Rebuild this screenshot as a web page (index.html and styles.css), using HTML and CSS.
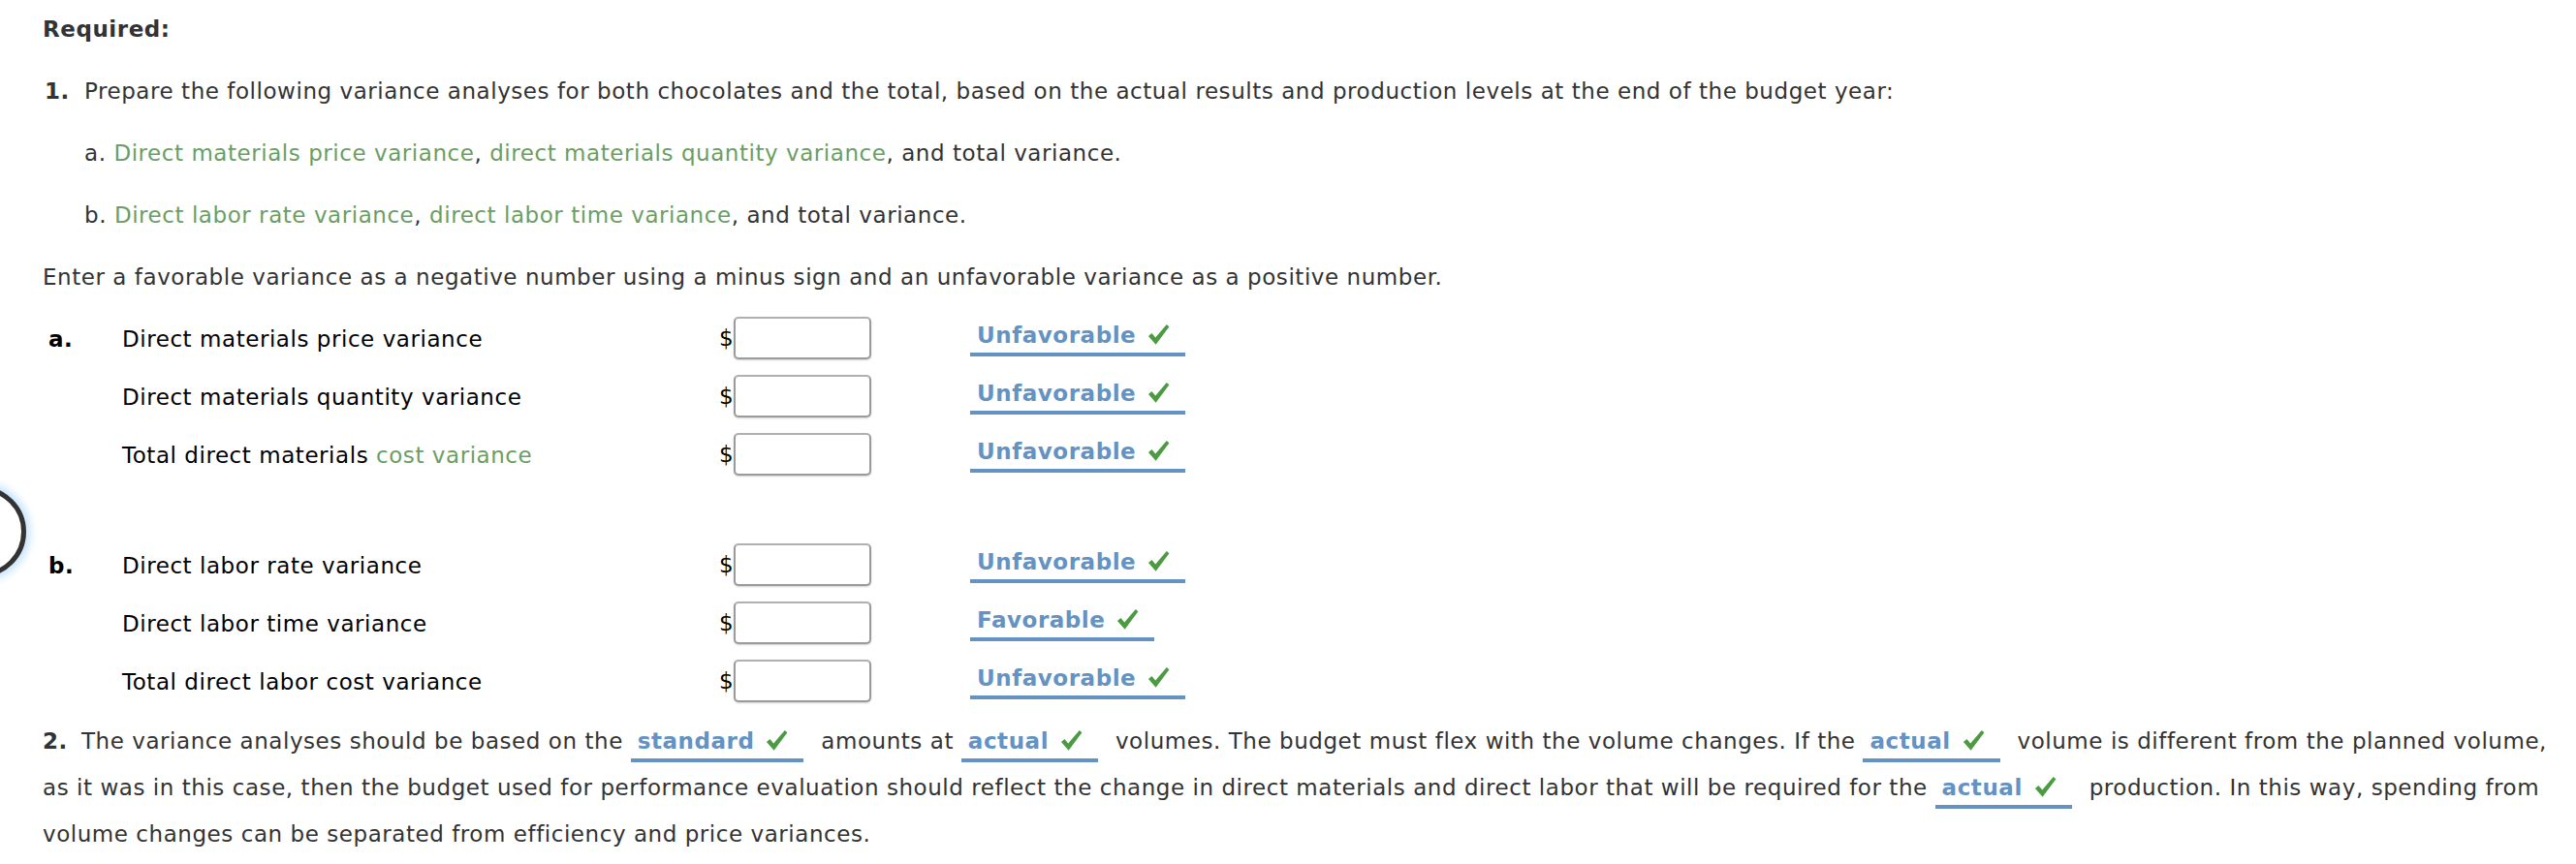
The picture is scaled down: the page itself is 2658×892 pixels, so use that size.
FILE: index.html
```html
<!DOCTYPE html>
<html lang="en">
<head>
<meta charset="utf-8">
<title>Required</title>
<link rel="stylesheet" href="styles.css">
</head>
<body>
<div class="focus-ring"></div>
<main class="page">
  <p class="required">Required:</p>
  <p class="line"><span class="num">1.</span>Prepare the following variance analyses for both chocolates and the total, based on the actual results and production levels at the end of the budget year:</p>
  <p class="line sub">a. <span class="term">Direct materials price variance</span>, <span class="term">direct materials quantity variance</span>, and total variance.</p>
  <p class="line sub">b. <span class="term">Direct labor rate variance</span>, <span class="term">direct labor time variance</span>, and total variance.</p>
  <p class="line">Enter a favorable variance as a negative number using a minus sign and an unfavorable variance as a positive number.</p>

  <div class="grid">
    <div class="letter">a.</div>
    <div class="label">Direct materials price variance</div>
    <div class="amount">$<input class="box" type="text"></div>
    <div class="cell"><span class="pick">Unfavorable<svg class="ok" viewBox="0 0 24 24"><path d="M1 13.5 L4.6 10.4 L8.6 15 L20.6 1 L23.4 3.4 L9 22.6 Z"/></svg></span></div>

    <div class="letter"></div>
    <div class="label">Direct materials quantity variance</div>
    <div class="amount">$<input class="box" type="text"></div>
    <div class="cell"><span class="pick">Unfavorable<svg class="ok" viewBox="0 0 24 24"><path d="M1 13.5 L4.6 10.4 L8.6 15 L20.6 1 L23.4 3.4 L9 22.6 Z"/></svg></span></div>

    <div class="letter"></div>
    <div class="label">Total direct materials <span class="term">cost variance</span></div>
    <div class="amount">$<input class="box" type="text"></div>
    <div class="cell"><span class="pick">Unfavorable<svg class="ok" viewBox="0 0 24 24"><path d="M1 13.5 L4.6 10.4 L8.6 15 L20.6 1 L23.4 3.4 L9 22.6 Z"/></svg></span></div>
  </div>

  <div class="grid grid-b">
    <div class="letter">b.</div>
    <div class="label">Direct labor rate variance</div>
    <div class="amount">$<input class="box" type="text"></div>
    <div class="cell"><span class="pick">Unfavorable<svg class="ok" viewBox="0 0 24 24"><path d="M1 13.5 L4.6 10.4 L8.6 15 L20.6 1 L23.4 3.4 L9 22.6 Z"/></svg></span></div>

    <div class="letter"></div>
    <div class="label">Direct labor time variance</div>
    <div class="amount">$<input class="box" type="text"></div>
    <div class="cell"><span class="pick">Favorable<svg class="ok" viewBox="0 0 24 24"><path d="M1 13.5 L4.6 10.4 L8.6 15 L20.6 1 L23.4 3.4 L9 22.6 Z"/></svg></span></div>

    <div class="letter"></div>
    <div class="label">Total direct labor cost variance</div>
    <div class="amount">$<input class="box" type="text"></div>
    <div class="cell"><span class="pick">Unfavorable<svg class="ok" viewBox="0 0 24 24"><path d="M1 13.5 L4.6 10.4 L8.6 15 L20.6 1 L23.4 3.4 L9 22.6 Z"/></svg></span></div>
  </div>

  <p class="para"><span class="num num2">2.</span>The variance analyses should be based on the <span class="pick">standard<svg class="ok" viewBox="0 0 24 24"><path d="M1 13.5 L4.6 10.4 L8.6 15 L20.6 1 L23.4 3.4 L9 22.6 Z"/></svg></span> amounts at <span class="pick">actual<svg class="ok" viewBox="0 0 24 24"><path d="M1 13.5 L4.6 10.4 L8.6 15 L20.6 1 L23.4 3.4 L9 22.6 Z"/></svg></span> volumes. The budget must flex with the volume changes. If the <span class="pick">actual<svg class="ok" viewBox="0 0 24 24"><path d="M1 13.5 L4.6 10.4 L8.6 15 L20.6 1 L23.4 3.4 L9 22.6 Z"/></svg></span> volume is different from the planned volume, as it was in this case, then the budget used for performance evaluation should reflect the change in direct materials and direct labor that will be required for the <span class="pick">actual<svg class="ok" viewBox="0 0 24 24"><path d="M1 13.5 L4.6 10.4 L8.6 15 L20.6 1 L23.4 3.4 L9 22.6 Z"/></svg></span> production. In this way, spending from volume changes can be separated from efficiency and price variances.</p>
</main>
</body>
</html>
```
FILE: styles.css
```css
html, body {
  margin: 0;
  padding: 0;
  background: #ffffff;
}

body {
  font-family: "DejaVu Sans", Verdana, sans-serif;
  font-size: 23px;
  letter-spacing: 0.55px;
  color: #333333;
  overflow: hidden;
}

.page {
  padding: 15px 24px 0 44px;
}

.required {
  margin: 0;
  font-weight: bold;
  line-height: 30px;
}

.line {
  margin: 34px 0 0 0;
  line-height: 30px;
}

.sub {
  padding-left: 43px;
}

.num {
  display: inline-block;
  width: 41px;
  font-weight: bold;
  margin-left: 2px;
}

.num2 {
  width: 40px;
  margin-left: 0;
}

.term {
  color: #6a9e63;
}

.grid {
  display: grid;
  grid-template-columns: 76px 616px 157px auto;
  grid-auto-rows: 60px;
  align-items: center;
  margin: 18px 0 0 6px;
  color: #000000;
}

.grid-b {
  margin-top: 54px;
}

.letter {
  font-weight: bold;
  line-height: 30px;
  padding-top: 2px;
}

.label {
  line-height: 30px;
  padding-top: 2px;
}

.amount {
  display: flex;
  align-items: center;
  line-height: 30px;
}

.box {
  box-sizing: border-box;
  width: 142px;
  height: 44px;
  margin: 0;
  border: 2px solid #9b9b9b;
  border-top-color: #b0b0b0;
  border-radius: 5px;
  box-shadow: 0 1px 2px rgba(0, 0, 0, 0.18);
  background: #ffffff;
}

.cell {
  padding-left: 102px;
}

.pick {
  display: inline-block;
  line-height: 30px;
  padding: 0 16px 3px 7px;
  border-bottom: 4px solid #6492c3;
  color: #6492c3;
  font-weight: bold;
  white-space: nowrap;
}

.ok {
  display: inline-block;
  width: 23px;
  height: 23px;
  margin-left: 12px;
  vertical-align: -3px;
  fill: #4c9a41;
}

.para {
  margin: 8px 0 0 0;
  line-height: 48px;
}

.para .pick {
  margin-right: 10px;
}

.focus-ring {
  position: absolute;
  left: -67px;
  top: 502px;
  width: 84px;
  height: 84px;
  border: 5px solid #333333;
  border-radius: 50%;
  box-shadow: 0 0 8px 4px rgba(120, 190, 255, 0.45);
}
```
